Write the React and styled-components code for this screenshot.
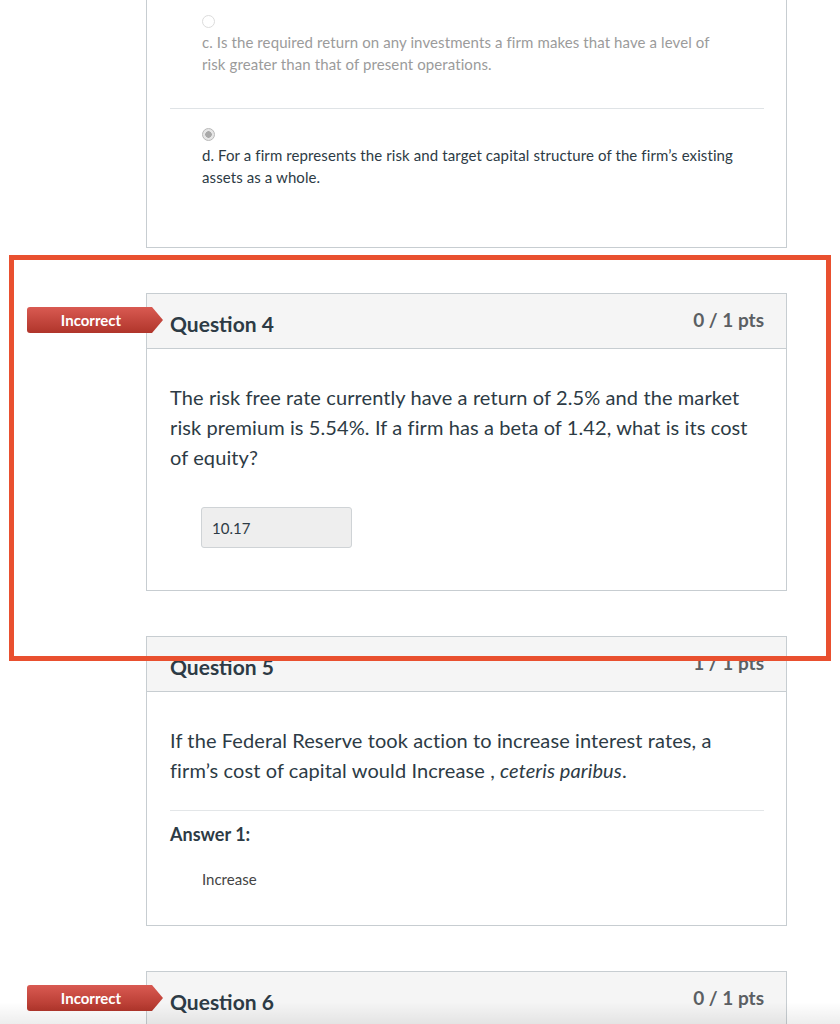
import React from "react";
import styled, { createGlobalStyle } from "styled-components";

const GlobalStyle = createGlobalStyle`
  html, body {
    margin: 0;
    padding: 0;
    overflow: hidden;
    background: #fff;
  }
  body {
    font-family: Lato, "Open Sans", "Liberation Sans", sans-serif;
    color: #2d3b45;
  }
`;

const Page = styled.div`
  position: relative;
  width: 840px;
  height: 1024px;
  overflow: hidden;
`;

const List = styled.div`
  display: flex;
  flex-direction: column;
  gap: 45px;
  padding-left: 146px;
  margin-top: -4px;
`;

const Question = styled.section`
  position: relative;
  width: 641px;
`;

const Card = styled.div`
  box-sizing: border-box;
  border: 1px solid #c7cdd1;
  border-top: ${(p) => (p.$continued ? "none" : "1px solid #c7cdd1")};
  background: #fff;
  padding-bottom: ${(p) => p.$pb || 0}px;
`;

const Header = styled.header`
  height: 55px;
  box-sizing: border-box;
  display: flex;
  align-items: center;
  justify-content: space-between;
  padding: 0 22px 0 23px;
  background: #f5f5f5;
  border-bottom: 1px solid #c7cdd1;
`;

const Title = styled.h2`
  margin: 5px 0 0;
  font-size: 21px;
  font-weight: 700;
  color: #2d3b45;
`;

const Points = styled.span`
  margin-top: -4px;
  font-size: 19px;
  font-weight: 700;
  color: #5b5f63;
`;

const Badge = styled.div`
  position: absolute;
  left: -119px;
  top: 14px;
  width: 136px;
  height: 26px;
  box-sizing: border-box;
  padding-right: 8px;
  display: flex;
  align-items: center;
  justify-content: center;
  border-radius: 3px 0 0 3px;
  background: linear-gradient(to bottom, #d95a52, #b0352b);
  clip-path: polygon(0 0, calc(100% - 11px) 0, 100% 50%, calc(100% - 11px) 100%, 0 100%);
  color: #fff;
  font-size: 15px;
  font-weight: 700;
`;

const Body = styled.div`
  padding: 0 22px 0 23px;
`;

const Prompt = styled.p`
  margin: 33px 0 0;
  font-size: 20px;
  letter-spacing: 0.1px;
  line-height: 30px;
  color: #2d3b45;
`;

const Option = styled.div`
  padding: 19px 28px 33px 32px;
  border-bottom: ${(p) => (p.$last ? "none" : "1px solid #dfe3e6")};
  color: ${(p) => (p.$faded ? "#9b9b9b" : "#2d3b45")};
  font-size: 15px;
  letter-spacing: 0.1px;
  line-height: 22px;
`;

const Radio = styled.span`
  display: block;
  box-sizing: border-box;
  width: 13px;
  height: 13px;
  margin: 0 0 3px;
  border-radius: 50%;
  border: 1px solid ${(p) => (p.$checked ? "#b8b8b8" : "#dcdcdc")};
  background: ${(p) =>
    p.$checked
      ? "radial-gradient(circle, #a9a9a9 0 3px, #e6e6e6 3.5px)"
      : "#fff"};
`;

const AnswerInput = styled.div`
  box-sizing: border-box;
  width: 151px;
  height: 41px;
  margin: 35px 0 0 31px;
  padding: 0 10px;
  display: flex;
  align-items: center;
  background: #eeeeee;
  border: 1px solid #cfd3d6;
  border-radius: 3px;
  font-size: 15px;
  color: #2d3b45;
`;

const Divider = styled.hr`
  margin: 25px 0 0;
  border: none;
  border-top: 1px solid #e3e6e8;
`;

const AnswerLabel = styled.div`
  margin-top: 12px;
  font-size: 18px;
  line-height: 22px;
  font-weight: 700;
  color: #2d3b45;
`;

const AnswerText = styled.div`
  margin: 23px 0 0 32px;
  font-size: 15px;
  line-height: 22px;
  color: #444;
`;

const Highlight = styled.div`
  position: absolute;
  left: 9px;
  top: 255px;
  width: 822px;
  height: 406px;
  box-sizing: border-box;
  border: 5px solid #e9502f;
  pointer-events: none;
`;

const BottomShade = styled.div`
  position: absolute;
  left: 0;
  right: 0;
  bottom: 0;
  height: 22px;
  background: linear-gradient(to bottom, rgba(0, 0, 0, 0), rgba(0, 0, 0, 0.07));
  pointer-events: none;
`;

export default function App() {
  return (
    <Page>
      <GlobalStyle />
      <List>
        <Question>
          <Card $continued $pb={26}>
            <Body>
              <Option $faded>
                <Radio />
                c. Is the required return on any investments a firm makes that have a level of
                risk greater than that of present operations.
              </Option>
              <Option $last>
                <Radio $checked />
                d. For a firm represents the risk and target capital structure of the firm’s existing
                assets as a whole.
              </Option>
            </Body>
          </Card>
        </Question>

        <Question>
          <Badge>Incorrect</Badge>
          <Card $pb={42}>
            <Header>
              <Title>Question 4</Title>
              <Points>0 / 1 pts</Points>
            </Header>
            <Body>
              <Prompt>
                The risk free rate currently have a return of 2.5% and the market risk
                premium is 5.54%. If a firm has a beta of 1.42, what is its cost of equity?
              </Prompt>
              <AnswerInput>10.17</AnswerInput>
            </Body>
          </Card>
        </Question>

        <Question>
          <Card $pb={35}>
            <Header>
              <Title>Question 5</Title>
              <Points>1 / 1 pts</Points>
            </Header>
            <Body>
              <Prompt>
                If the Federal Reserve took action to increase interest rates, a firm’s cost of
                capital would Increase , <em>ceteris paribus</em>.
              </Prompt>
              <Divider />
              <AnswerLabel>Answer 1:</AnswerLabel>
              <AnswerText>Increase</AnswerText>
            </Body>
          </Card>
        </Question>

        <Question>
          <Badge>Incorrect</Badge>
          <Card $pb={60}>
            <Header>
              <Title>Question 6</Title>
              <Points>0 / 1 pts</Points>
            </Header>
          </Card>
        </Question>
      </List>
      <Highlight />
      <BottomShade />
    </Page>
  );
}
